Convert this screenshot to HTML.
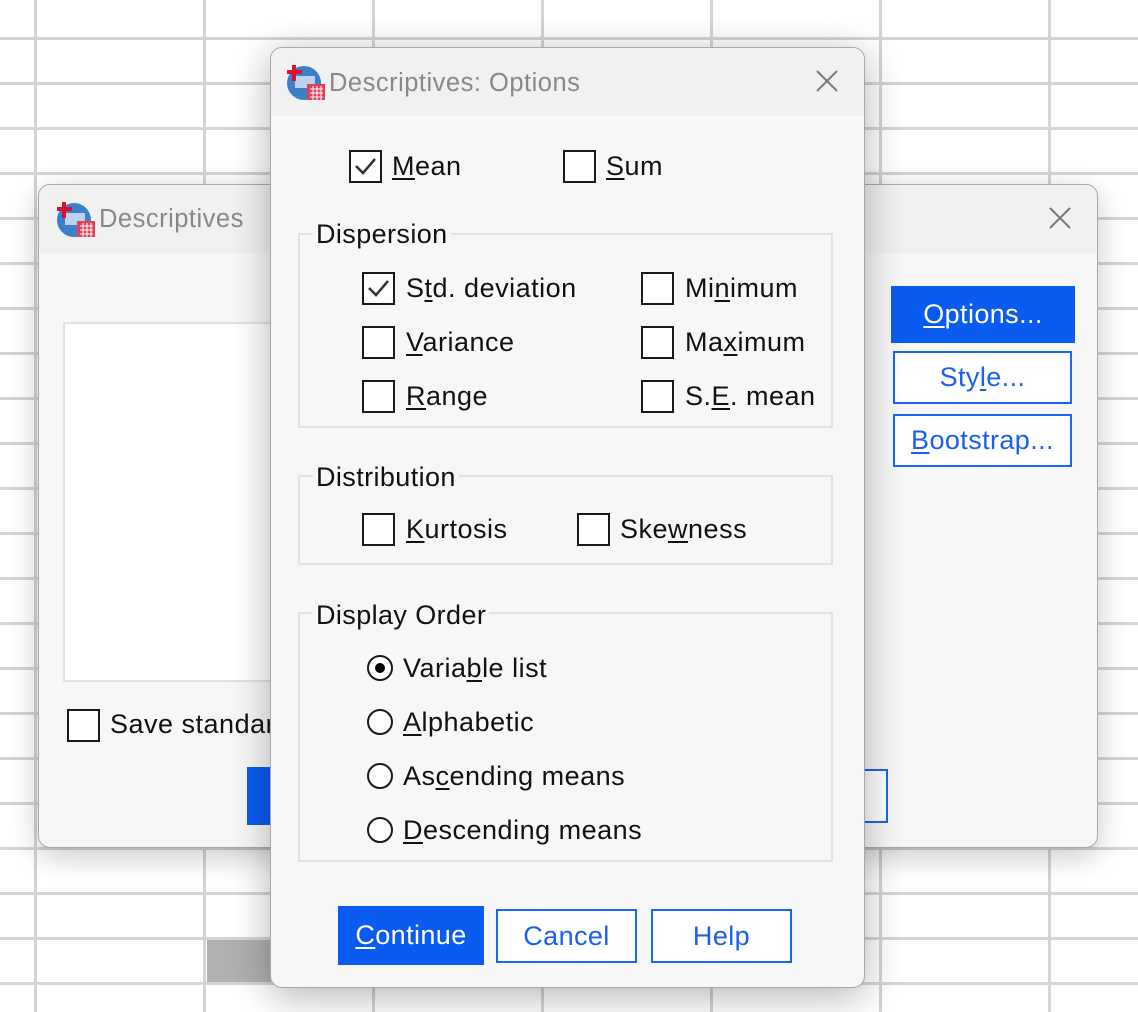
<!DOCTYPE html>
<html><head><meta charset="utf-8"><style>
*{margin:0;padding:0;box-sizing:border-box}
body{width:1138px;height:1012px;overflow:hidden;background:#fff;position:relative;font-family:"Liberation Sans",sans-serif;}
.a{position:absolute}
.vl{position:absolute;top:0;width:3px;height:1012px;background:#d4d4d4}
.hl{position:absolute;left:0;height:3px;width:1138px;background:#d4d4d4}
.dlg{position:absolute;background:#f7f7f7;border:1px solid #a8a8a8;border-radius:12px;overflow:hidden}
.tb{position:absolute;left:0;right:0;top:0;background:#f1f1f1}
.ttl{position:absolute;font-size:25.5px;color:#888;white-space:nowrap;letter-spacing:0.5px}
.cb{position:absolute;width:33px;height:33px;border:2px solid #1a1a1a;background:#fff}
.t{position:absolute;font-size:27px;color:#111;white-space:nowrap;line-height:33px;letter-spacing:0.5px}
.grp{position:absolute;border:2px solid #e2e2e2}
.lg{position:absolute;font-size:27px;color:#111;background:#f7f7f7;padding:0 3px;line-height:30px;white-space:nowrap;letter-spacing:0.4px}
.rd{position:absolute;width:26px;height:26px;border:2px solid #1a1a1a;border-radius:50%;background:#fff}
.btn{position:absolute;border:2px solid #1a66f0;background:#fff;color:#1a5ff0;font-size:27px;text-align:center;white-space:nowrap;letter-spacing:0.4px}
.pr{background:#0a5cf0;color:#fff;border-color:#0a5cf0}
u{text-decoration:underline;text-underline-offset:3px}
</style></head><body>
<div class="vl" style="left:34px"></div><div class="vl" style="left:203px"></div><div class="vl" style="left:372px"></div><div class="vl" style="left:541px"></div><div class="vl" style="left:710px"></div><div class="vl" style="left:879px"></div><div class="vl" style="left:1048px"></div>
<div class="hl" style="top:37px"></div><div class="hl" style="top:82px"></div><div class="hl" style="top:127px"></div><div class="hl" style="top:172px"></div><div class="hl" style="top:217px"></div><div class="hl" style="top:262px"></div><div class="hl" style="top:307px"></div><div class="hl" style="top:352px"></div><div class="hl" style="top:397px"></div><div class="hl" style="top:442px"></div><div class="hl" style="top:487px"></div><div class="hl" style="top:532px"></div><div class="hl" style="top:577px"></div><div class="hl" style="top:622px"></div><div class="hl" style="top:667px"></div><div class="hl" style="top:712px"></div><div class="hl" style="top:757px"></div><div class="hl" style="top:802px"></div><div class="hl" style="top:847px"></div><div class="hl" style="top:892px"></div><div class="hl" style="top:937px"></div><div class="hl" style="top:982px"></div>
<div class="a" style="left:207px;top:940px;width:64px;height:42px;background:#b0b0b0"></div>

<!-- back dialog -->
<div class="dlg" style="left:38px;top:184px;width:1060px;height:664px;box-shadow:0 8px 30px rgba(0,0,0,.22)">
 <div class="tb" style="height:68px"></div>
 <svg class="a" style="left:18px;top:16px" width="38" height="38" viewBox="0 0 38 38"><circle cx="17" cy="19" r="17" fill="#3d7fc8"/><rect x="8" y="12" width="20" height="12" fill="#b9d3f0"/><rect x="5" y="1" width="4" height="16" fill="#d9102e"/><rect x="0" y="6" width="15" height="4" fill="#d9102e"/><rect x="20" y="20" width="18" height="16" fill="#e0405a"/><path d="M23 25h13M23 29h13M23 33h13M26 22v14M30 22v14M34 22v14" stroke="#fff" stroke-width="1"/></svg>
 <div class="ttl" style="left:60px;top:20px">Descriptives</div>
 <svg class="a" style="left:1010px;top:22px" width="22" height="22"><path d="M1 1L21 21M21 1L1 21" stroke="#7a7a7a" stroke-width="2"/></svg>
 <div class="a" style="left:24px;top:137px;width:240px;height:360px;background:#fff;border:2px solid #e2e2e2"></div>
 <div class="cb" style="left:28px;top:524px"></div>
 <div class="t" style="left:71px;top:523px">Save standardized values</div>
 <div class="a pr" style="left:208px;top:582px;width:80px;height:58px;background:#0a5cf0"></div>
 <div class="btn" style="left:780px;top:584px;width:69px;height:54px"></div>
 <div class="btn pr" style="left:852px;top:101px;width:184px;height:57px;line-height:53px"><u>O</u>ptions...</div>
 <div class="btn" style="left:854px;top:166px;width:179px;height:53px;line-height:49px">Sty<u>l</u>e...</div>
 <div class="btn" style="left:854px;top:229px;width:179px;height:53px;line-height:49px"><u>B</u>ootstrap...</div>
</div>

<!-- options dialog -->
<div class="dlg" style="left:270px;top:47px;width:595px;height:941px;box-shadow:0 8px 40px rgba(0,0,0,.3)">
 <div class="tb" style="height:68px"></div>
 <svg class="a" style="left:16px;top:16px" width="38" height="38" viewBox="0 0 38 38"><circle cx="17" cy="19" r="17" fill="#3d7fc8"/><rect x="8" y="12" width="20" height="12" fill="#b9d3f0"/><rect x="5" y="1" width="4" height="16" fill="#d9102e"/><rect x="0" y="6" width="15" height="4" fill="#d9102e"/><rect x="20" y="20" width="18" height="16" fill="#e0405a"/><path d="M23 25h13M23 29h13M23 33h13M26 22v14M30 22v14M34 22v14" stroke="#fff" stroke-width="1"/></svg>
 <div class="ttl" style="left:58px;top:21px">Descriptives: Options</div>
 <svg class="a" style="left:545px;top:22px" width="22" height="22"><path d="M1 1L21 21M21 1L1 21" stroke="#7a7a7a" stroke-width="2"/></svg>

 <div class="cb" style="left:78px;top:102px"><svg width="29" height="29"><path d="M5 14L12 21L24 7" stroke="#333" stroke-width="2.5" fill="none"/></svg></div>
 <div class="t" style="left:121px;top:102px"><u>M</u>ean</div>
 <div class="cb" style="left:292px;top:102px"></div>
 <div class="t" style="left:335px;top:102px"><u>S</u>um</div>

 <div class="grp" style="left:27px;top:185px;width:535px;height:195px"></div>
 <div class="lg" style="left:42px;top:171px">Dispersion</div>
 <div class="cb" style="left:91px;top:224px"><svg width="29" height="29"><path d="M5 14L12 21L24 7" stroke="#333" stroke-width="2.5" fill="none"/></svg></div>
 <div class="t" style="left:135px;top:224px">S<u>t</u>d. deviation</div>
 <div class="cb" style="left:370px;top:224px"></div><div class="t" style="left:414px;top:224px">Mi<u>n</u>imum</div>
 <div class="cb" style="left:91px;top:278px"></div><div class="t" style="left:135px;top:278px"><u>V</u>ariance</div>
 <div class="cb" style="left:370px;top:278px"></div><div class="t" style="left:414px;top:278px">Ma<u>x</u>imum</div>
 <div class="cb" style="left:91px;top:332px"></div><div class="t" style="left:135px;top:332px"><u>R</u>ange</div>
 <div class="cb" style="left:370px;top:332px"></div><div class="t" style="left:414px;top:332px">S.<u>E</u>. mean</div>

 <div class="grp" style="left:27px;top:427px;width:535px;height:90px"></div>
 <div class="lg" style="left:42px;top:414px">Distribution</div>
 <div class="cb" style="left:91px;top:465px"></div><div class="t" style="left:135px;top:465px"><u>K</u>urtosis</div>
 <div class="cb" style="left:306px;top:465px"></div><div class="t" style="left:349px;top:465px">Ske<u>w</u>ness</div>

 <div class="grp" style="left:27px;top:564px;width:535px;height:250px"></div>
 <div class="lg" style="left:42px;top:552px">Display Order</div>
 <div class="rd" style="left:96px;top:607px"><div class="a" style="left:6px;top:6px;width:10px;height:10px;border-radius:50%;background:#000"></div></div>
 <div class="t" style="left:132px;top:604px">Varia<u>b</u>le list</div>
 <div class="rd" style="left:96px;top:661px"></div><div class="t" style="left:132px;top:658px"><u>A</u>lphabetic</div>
 <div class="rd" style="left:96px;top:715px"></div><div class="t" style="left:132px;top:712px">As<u>c</u>ending means</div>
 <div class="rd" style="left:96px;top:769px"></div><div class="t" style="left:132px;top:766px"><u>D</u>escending means</div>

 <div class="btn pr" style="left:67px;top:858px;width:146px;height:59px;line-height:55px"><u>C</u>ontinue</div>
 <div class="btn" style="left:225px;top:861px;width:141px;height:54px;line-height:50px">Cancel</div>
 <div class="btn" style="left:380px;top:861px;width:141px;height:54px;line-height:50px">Help</div>
</div>
</body></html>
